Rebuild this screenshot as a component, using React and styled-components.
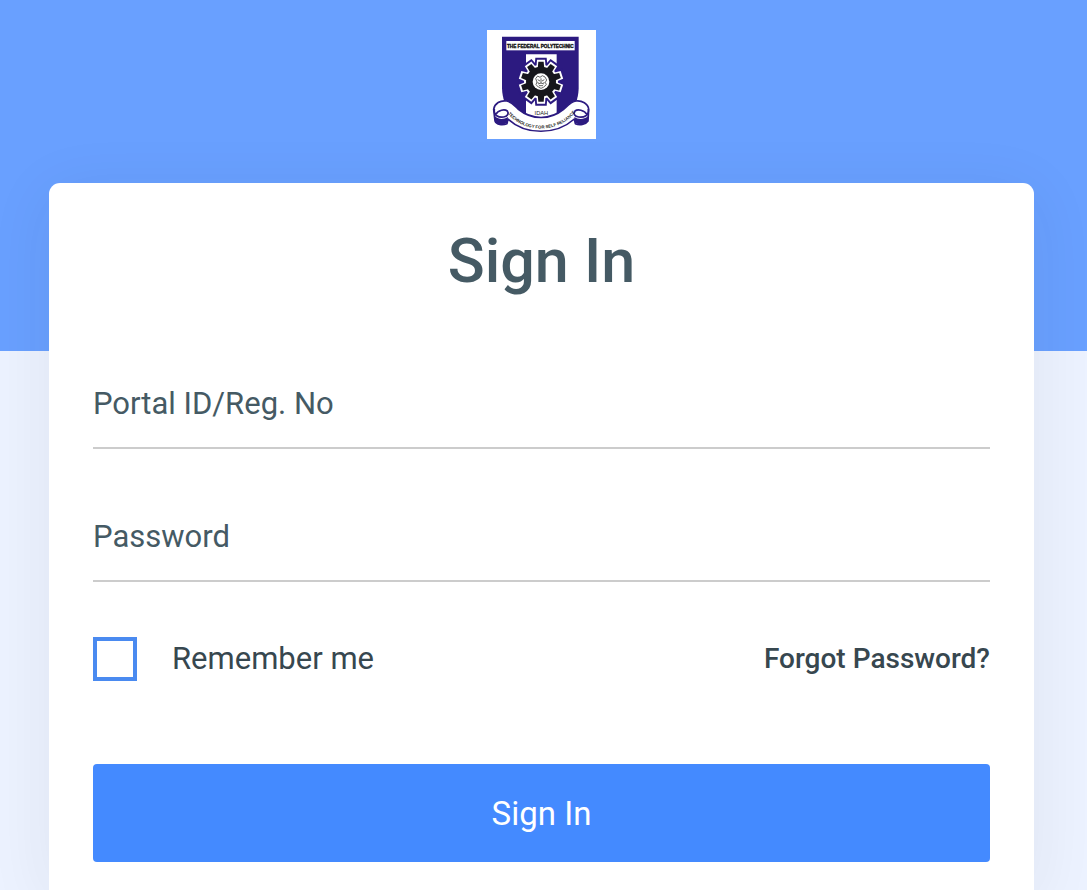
import React from "react";
import styled, { createGlobalStyle } from "styled-components";

const GlobalStyle = createGlobalStyle`
  *, *::before, *::after { box-sizing: border-box; }
  body {
    margin: 0;
    background: #ecf2ff;
    color: #37474f;
    font-family: Roboto, "Liberation Sans", sans-serif;
  }
`;

const Page = styled.div`
  display: flex;
  flex-direction: column;
  min-height: 100vh;
`;

const Hero = styled.header`
  display: flex;
  justify-content: center;
  padding: 30px 53px 212px 49px;
  background: #69a0ff;
`;

const Logo = styled.svg`
  display: block;
  width: 109px;
  height: 109px;
  background: #fff;
`;

const Main = styled.main`
  flex: 1;
  display: flex;
  flex-direction: column;
  margin-top: -168px;
  padding: 0 53px 0 49px;
`;

const Card = styled.form`
  flex: 1;
  display: flex;
  flex-direction: column;
  padding: 44px 44px 28px;
  background: #fff;
  border-radius: 11px 11px 0 0;
  box-shadow: 0 10px 66px rgba(43, 43, 43, 0.07);
`;

const Title = styled.h1`
  margin: 0 0 78px;
  font-size: 61px;
  line-height: 69px;
  font-weight: 500;
  text-align: center;
  color: #455a64;
`;

const Fields = styled.div`
  display: flex;
  flex-direction: column;
  gap: 58px;
`;

const Field = styled.div`
  display: grid;

  > * { grid-area: 1 / 1; }
`;

const FieldInput = styled.input`
  width: 100%;
  height: 75px;
  padding: 0 0 14px;
  border: 0;
  border-bottom: 2px solid #ccc;
  border-radius: 0;
  outline: 0;
  background: none;
  font: inherit;
  font-size: 31px;
  color: inherit;

  &:focus { border-color: #448aff; }
`;

const FieldLabel = styled.label`
  font-size: 31px;
  line-height: 60px;
  color: #455a64;
  pointer-events: none;

  ${FieldInput}:focus + &,
  ${FieldInput}:not(:placeholder-shown) + & { visibility: hidden; }
`;

const Options = styled.div`
  display: flex;
  align-items: center;
  justify-content: space-between;
  margin: 55px 0 83px;
`;

const Remember = styled.label`
  display: flex;
  align-items: center;
  gap: 35px;
  font-size: 31px;
  line-height: 44px;
`;

const Checkbox = styled.input`
  appearance: none;
  width: 44px;
  height: 44px;
  margin: 0;
  border: 4px solid #4a8af0;

  &:checked { background: #4a8af0; }
`;

const ForgotLink = styled.a`
  font-size: 28px;
  line-height: 44px;
  font-weight: 500;
  color: #37474f;
  text-decoration: none;
`;

const SubmitButton = styled.button`
  height: 98px;
  border: 0;
  border-radius: 4px;
  background: #448aff;
  color: #fff;
  font: inherit;
  font-size: 33px;
  cursor: pointer;
`;

const GEAR_TEETH = [0, 36, 72, 108, 144, 180, 216, 252, 288, 324];

function Crest() {
  return (
    <Logo viewBox="15 15 327 327" role="img" aria-label="The Federal Polytechnic Idah">
      <path d="M60 35H290V190C288 258 244 298 176 316C108 298 62 258 60 190Z" fill="#2c1a80" />
      <rect x="73" y="48" width="205" height="28" fill="#fff" />
      <text
        x="175"
        y="69"
        textAnchor="middle"
        fontFamily="Liberation Sans Narrow, Liberation Sans, sans-serif"
        fontSize="14"
        fontWeight="700"
        fill="#111"
        stroke="#111"
      >
        THE FEDERAL POLYTECHNIC
      </text>
      <path d="M132 88H224V282H132Z" fill="#fff" />
      <g transform="translate(177 170)">
        {GEAR_TEETH.map((angle) => (
          <path key={angle} d="M-20 -38L-17 -72H17L20 -38Z" fill="#2c1a80" transform={`rotate(${angle})`} />
        ))}
        {GEAR_TEETH.map((angle) => (
          <path key={angle} d="M-14 -38L-12 -66H12L14 -38Z" fill="#fff" transform={`rotate(${angle})`} />
        ))}
        <circle r="51" fill="#fff" />
        {GEAR_TEETH.map((angle) => (
          <path key={angle} d="M-10 -38L-8 -60H8L10 -38Z" fill="#17171c" transform={`rotate(${angle})`} />
        ))}
        <circle r="45" fill="#17171c" />
        <circle r="25" fill="#fff" />
        <g fill="none" stroke="#666" strokeWidth="3">
          <path d="M-16 -9L-10 -17L-3 -13L4 -18L12 -14L17 -5L13 2L16 9L7 17L0 20L-8 16L-15 9L-12 1Z" />
          <path d="M-10 -6L-3 -2M10 -6L3 -2M0 -10V5M-8 7L0 4L8 7M-6 12H6M-11 3L-5 5M11 3L5 5" />
        </g>
      </g>
      <text x="178" y="271" textAnchor="middle" fontFamily="Liberation Sans, sans-serif" fontSize="17" fill="#222">
        IDAH
      </text>
      <g fill="#fff" stroke="#2c1a80" strokeWidth="5" strokeLinejoin="round">
        <path d="M74 228C88 230 96 241 108 252C150 286 204 286 246 252C259 240 268 230 282 228C300 226 318 236 320 252L318 288C311 299 292 302 280 296L277 282C222 331 131 331 78 282L75 296C61 302 43 299 39 288L35 253C38 235 55 225 74 228Z" />
        <path d="M37 252C34 272 50 278 65 276C76 274 82 266 76 258C68 252 49 254 40 270" />
        <path d="M319 252C322 272 306 278 290 276C278 274 272 266 279 258C287 252 306 254 316 270" />
      </g>
      <path d="M39 274C51 285 67 283 78 276L75 295C61 301 43 298 39 288ZM318 274C304 285 288 283 277 276L280 295C294 301 312 298 318 288Z" fill="#2c1a80" />
      <path id="motto-curve" d="M78 266C126 326 230 326 280 262" fill="none" />
      <text fontFamily="Liberation Sans, sans-serif" fontSize="13" fontWeight="700" fill="#222" textAnchor="middle">
        <textPath href="#motto-curve" startOffset="50%">TECHNOLOGY FOR SELF RELIANCE</textPath>
      </text>
    </Logo>
  );
}

export default function App() {
  return (
    <Page>
      <GlobalStyle />
      <Hero>
        <Crest />
      </Hero>
      <Main>
        <Card onSubmit={(event) => event.preventDefault()}>
          <Title>Sign In</Title>
          <Fields>
            <Field>
              <FieldInput id="portal-id" type="text" placeholder=" " autoComplete="username" />
              <FieldLabel htmlFor="portal-id">Portal ID/Reg. No</FieldLabel>
            </Field>
            <Field>
              <FieldInput id="password" type="password" placeholder=" " autoComplete="current-password" />
              <FieldLabel htmlFor="password">Password</FieldLabel>
            </Field>
          </Fields>
          <Options>
            <Remember>
              <Checkbox type="checkbox" />
              Remember me
            </Remember>
            <ForgotLink href="#forgot">Forgot Password?</ForgotLink>
          </Options>
          <SubmitButton type="submit">Sign In</SubmitButton>
        </Card>
      </Main>
    </Page>
  );
}
